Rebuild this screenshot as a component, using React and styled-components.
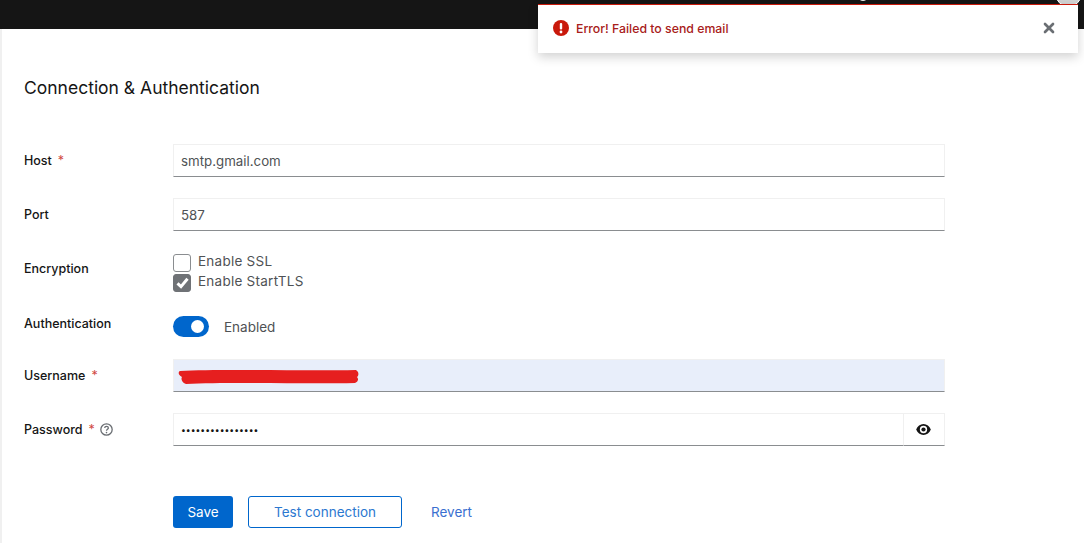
import React from 'react';
import styled, { createGlobalStyle } from 'styled-components';
import { X } from 'lucide-react';

const GlobalStyle = createGlobalStyle`
  html, body {
    margin: 0;
    height: 100%;
    background: #fff;
    overflow: hidden;
  }
  body {
    font-family: "Inter", "Liberation Sans", sans-serif;
    color: #151515;
  }
`;

const Page = styled.div`
  position: relative;
  height: 543px;
  display: flex;
  flex-direction: column;
`;

const TopBar = styled.div`
  position: relative;
  height: 29px;
  background: #151515;
  flex-shrink: 0;
  overflow: hidden;
`;

const BarIcon = styled.span`
  position: absolute;
  top: -13px;
  left: 857px;
  width: 12px;
  height: 14px;
  border-radius: 50%;
  background: #f0f0f0;
`;

const Avatar = styled.span`
  position: absolute;
  top: -20px;
  left: 1055px;
  width: 25px;
  height: 25px;
  border-radius: 50%;
  background: #d2d2d2;
  border: 1px solid #fff;
`;

const Body = styled.div`
  flex: 1;
  display: flex;
`;

const SideEdge = styled.div`
  width: 2px;
  background: #f0f0f0;
`;

const Main = styled.main`
  flex: 1;
  padding: 48px 0 0 22px;
`;

const Title = styled.h2`
  margin: 0 0 45px;
  font-family: "Inter", sans-serif;
  font-size: 17.5px;
  font-weight: 400;
  line-height: 22px;
  color: #151515;
`;

const Form = styled.form`
  display: grid;
  grid-template-columns: 149px 772px;
  row-gap: 21px;
  align-items: center;
`;

const Label = styled.label`
  display: flex;
  align-items: center;
  font-size: 12.5px;
  font-weight: 500;
  line-height: 18px;
  color: #151515;
  margin-bottom: ${(p) => p.$lift || 0}px;
`;

const Required = styled.span`
  margin-left: 6px;
  font-weight: 400;
  color: #d1493f;
`;

const HelpIcon = styled.svg`
  margin-left: 5px;
  width: 13px;
  height: 13px;
`;

const Input = styled.input`
  display: block;
  box-sizing: border-box;
  width: 100%;
  height: 33px;
  padding: 0 7px;
  border: 1px solid #f0f0f0;
  border-bottom: 1px solid #8a8d90;
  background: ${(p) => (p.$filled ? '#e8eefa' : '#fff')};
  font-family: "Inter", sans-serif;
  font-size: 13.3px;
  color: #4f5255;
  outline: none;
`;

const PasswordInput = styled(Input)`
  font-size: 8.6px;
  color: #151515;
`;

const Checks = styled.div`
  display: flex;
  flex-direction: column;
  gap: 2px;
  margin-top: 2px;
`;

const CheckRow = styled.div`
  display: flex;
  align-items: flex-start;
  gap: 7px;
  height: 18px;
  font-size: 13.5px;
  letter-spacing: 0.25px;
  line-height: 14px;
  color: #4f5255;
`;

const CheckBox = styled.span`
  box-sizing: border-box;
  width: 18px;
  height: 18px;
  border-radius: 3px;
  border: 1px solid ${(p) => (p.$on ? '#6f7276' : '#8a8d90')};
  background: ${(p) => (p.$on ? '#6f7276' : '#fff')};
  display: flex;
  align-items: center;
  justify-content: center;
`;

const SwitchRow = styled.div`
  display: flex;
  align-items: center;
  gap: 15px;
  margin: 3px 0 1px;
  font-size: 13.5px;
  color: #4f5255;
`;

const Switch = styled.span`
  position: relative;
  display: block;
  width: 36px;
  height: 21px;
  border-radius: 11px;
  background: #06c;

  &::after {
    content: '';
    position: absolute;
    top: 4px;
    right: 5px;
    width: 13px;
    height: 13px;
    border-radius: 50%;
    background: #fff;
  }
`;

const FieldWrap = styled.div`
  position: relative;
`;

const Redaction = styled.svg`
  position: absolute;
  left: 5px;
  top: 10px;
  width: 181px;
  height: 16px;
`;

const PasswordGroup = styled.div`
  display: flex;
`;

const EyeButton = styled.button`
  box-sizing: border-box;
  width: 43px;
  height: 33px;
  padding: 0 1px 0 0;
  border: 1px solid #f0f0f0;
  border-left: 0;
  border-bottom: 1px solid #8a8d90;
  background: #fff;
  display: flex;
  align-items: center;
  justify-content: center;
`;

const Actions = styled.div`
  grid-column: 2;
  display: flex;
  align-items: center;
  margin-top: 29px;
`;

const SaveButton = styled.button`
  box-sizing: border-box;
  width: 60px;
  height: 32px;
  border: 0;
  border-radius: 3px;
  background: #06c;
  color: #fff;
  font-family: "Inter", sans-serif;
  font-size: 13.5px;
`;

const TestButton = styled.button`
  box-sizing: border-box;
  width: 154px;
  height: 32px;
  margin-left: 15px;
  border: 1px solid #06c;
  border-radius: 3px;
  background: #fff;
  color: #2b78d0;
  font-family: "Inter", sans-serif;
  font-size: 13.5px;
`;

const RevertLink = styled.a`
  margin-left: 29px;
  color: #3a6fd0;
  font-size: 13.5px;
`;

const Toast = styled.div`
  position: absolute;
  top: 4px;
  left: 538px;
  box-sizing: border-box;
  width: 540px;
  height: 49px;
  padding: 0 21px 2px 15px;
  display: flex;
  align-items: center;
  background: #fff;
  border-top: 1px solid #c9190b;
  box-shadow: 0 4px 10px rgba(3, 3, 3, 0.18);
`;

const ToastIcon = styled.svg`
  width: 16px;
  height: 16px;
  margin-right: 7px;
`;

const ToastText = styled.span`
  flex: 1;
  font-size: 12.3px;
  font-weight: 500;
  color: #a8201a;
`;

const ToastClose = styled.span`
  display: flex;
  color: #6a6e73;
`;

export default function App() {
  return (
    <Page>
      <GlobalStyle />
      <TopBar>
        <BarIcon />
        <Avatar />
      </TopBar>
      <Body>
        <SideEdge />
        <Main>
          <Title>Connection &amp; Authentication</Title>
          <Form>
            <Label>Host<Required>*</Required></Label>
            <Input readOnly value="smtp.gmail.com" />

            <Label>Port</Label>
            <Input readOnly value="587" />

            <Label $lift={6}>Encryption</Label>
            <Checks>
              <CheckRow>
                <CheckBox />
                Enable SSL
              </CheckRow>
              <CheckRow>
                <CheckBox $on>
                  <svg width="13" height="12" viewBox="0 0 13 12">
                    <path d="M1.500 6.300 L5 9.600 L11.500 1.800" fill="none" stroke="#fff" strokeWidth="3" />
                  </svg>
                </CheckBox>
                Enable StartTLS
              </CheckRow>
            </Checks>

            <Label $lift={4}>Authentication</Label>
            <SwitchRow>
              <Switch />
              Enabled
            </SwitchRow>

            <Label>Username<Required>*</Required></Label>
            <FieldWrap>
              <Input $filled readOnly value="" />
              <Redaction viewBox="0 0 181 16">
                <path d="M2 2 C40 0 130 2 178 1 C181 3 181 6 179 8 C181 10 180 13 177 14 C130 15 50 13 8 15 C3 13 3 9 4 8 C0 6 0 3 2 2 Z" fill="#e61f1f" />
              </Redaction>
            </FieldWrap>

            <Label>
              Password<Required>*</Required>
              <HelpIcon viewBox="0 0 16 16">
                <circle cx="8" cy="8" r="7" fill="none" stroke="#6a6e73" strokeWidth="1.6" />
                <path d="M5.800 6.200 C5.800 3.600 10.300 3.600 10.300 6.200 C10.300 7.800 8 7.800 8 9.600" fill="none" stroke="#6a6e73" strokeWidth="1.6" />
                <circle cx="8" cy="11.800" r="1" fill="#6a6e73" />
              </HelpIcon>
            </Label>
            <PasswordGroup>
              <PasswordInput type="password" readOnly value="aaaaaaaaaaaaaaaa" />
              <EyeButton type="button" aria-label="Show password">
                <svg width="15" height="11" viewBox="0 0 16 12">
                  <path fillRule="evenodd" fill="#151515" d="M8 0C4.400 0 1.400 2.300 0 6c1.400 3.700 4.400 6 8 6s6.600-2.300 8-6c-1.400-3.700-4.400-6-8-6zm0 10a4 4 0 1 1 0-8 4 4 0 0 1 0 8z" />
                  <circle cx="8" cy="6" r="2.300" fill="#151515" />
                </svg>
              </EyeButton>
            </PasswordGroup>

            <Actions>
              <SaveButton type="button">Save</SaveButton>
              <TestButton type="button">Test connection</TestButton>
              <RevertLink>Revert</RevertLink>
            </Actions>
          </Form>
        </Main>
      </Body>
      <Toast>
        <ToastIcon viewBox="0 0 16 16">
          <circle cx="8" cy="8" r="8" fill="#c9190b" />
          <rect x="6.800" y="3" width="2.400" height="6.500" rx="1" fill="#fff" />
          <circle cx="8" cy="12" r="1.400" fill="#fff" />
        </ToastIcon>
        <ToastText>Error! Failed to send email</ToastText>
        <ToastClose>
          <X size={16} strokeWidth={4} />
        </ToastClose>
      </Toast>
    </Page>
  );
}
